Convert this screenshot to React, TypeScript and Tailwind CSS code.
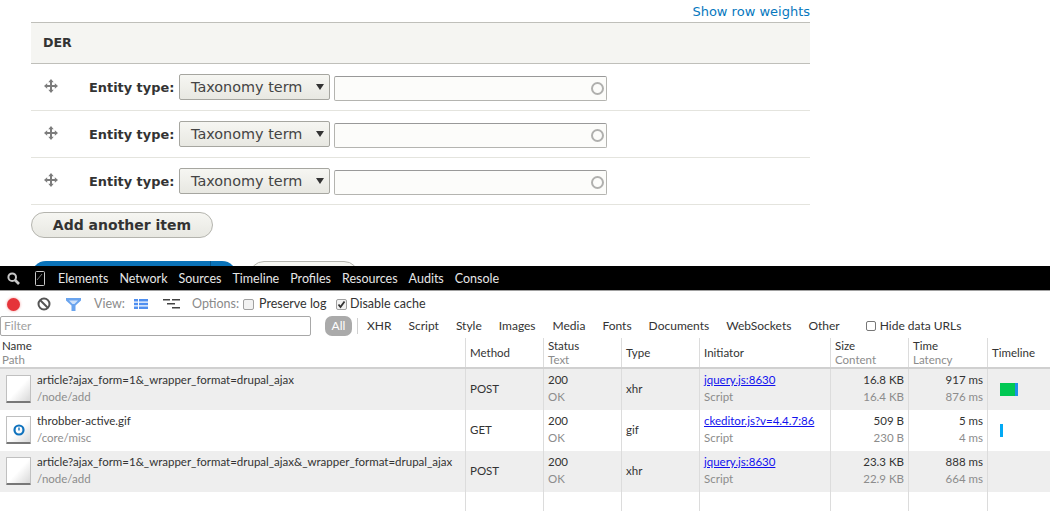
import React, { FC } from "react";

const dejavu = "font-['DejaVu_Sans',sans-serif]";

const MoveIcon = () => (
  <svg width="14" height="14" viewBox="0 0 14 14" fill="#7c7c7c">
    <path d="M7 0 9.7 3.2H8V6H10.8V4.3L14 7 10.8 9.7V8H8V10.8H9.7L7 14 4.3 10.8H6V8H3.2V9.7L0 7 3.2 4.3V6H6V3.2H4.3Z" />
  </svg>
);

const EntityRow = () => (
  <div className="flex h-[47px] border-b border-[#e4e4de] pl-[13px]">
    <div className="pt-[15px]">
      <MoveIcon />
    </div>
    <div className="ml-[31px] flex pt-[10px]">
      <span className="mt-[5px] w-[90px] whitespace-nowrap text-[12.9px] font-bold leading-[18px] text-[#333]">Entity type:</span>
      <div className="flex h-[26px] w-[151px] items-center justify-between rounded-[2px] border border-[#a6a6a0] bg-gradient-to-b from-[#f6f6f2] to-[#e8e8e2] pl-[11px] pr-[5px] text-[14.4px] leading-[18px] text-[#444]">
        <span>Taxonomy term</span>
        <span className="h-0 w-0 border-x-[4.5px] border-t-[6px] border-x-transparent border-t-[#333]" />
      </div>
      <div className="relative mt-[2px] ml-[4px] h-[25px] w-[273px] rounded-[2px] border border-[#b4b4b0] border-t-[#999] bg-[#fcfcfa]">
        <span className="absolute right-[2px] top-[5px] h-[13px] w-[13px] rounded-full border-2 border-[#b0b0ae]" />
      </div>
    </div>
  </div>
);

const Form = () => (
  <div className={`h-[266px] overflow-hidden bg-white pl-[31px] ${dejavu}`}>
    <div className="w-[779px]">
      <div className="flex h-[22px] items-start justify-end pt-[3px] text-[13px] leading-[18px] text-[#0678be]">
        Show row weights
      </div>
      <div className="flex h-[42px] items-center border-y border-[#bfbfba] bg-[#f5f5f2] pl-[12px] text-[12.6px] font-bold text-[#333]">
        DER
      </div>
      <EntityRow />
      <EntityRow />
      <EntityRow />
    </div>
    <div className="mt-[7px] flex h-[26px] w-[182px] items-center justify-center rounded-full border border-[#b4b4ae] bg-gradient-to-b from-[#f6f6f2] to-[#e8e8e2] pt-[1px] text-[14px] font-bold text-[#333]">
      Add another item
    </div>
    <div className="mt-[23px] flex">
      <div className="flex h-[30px] w-[206px] justify-end rounded-full bg-[#0a72b8] pr-[26px]">
        <span className="h-full w-px bg-[#06558c]" />
      </div>
      <div className="ml-[12px] h-[30px] w-[110px] rounded-full border border-[#b4b4ae] bg-[#f6f6f2]" />
    </div>
  </div>
);

const tabs = ["Elements", "Network", "Sources", "Timeline", "Profiles", "Resources", "Audits", "Console"];

const TabBar = () => (
  <div className="flex h-[25px] items-center border-y border-[#a0a0a0] border-t-black bg-black pl-[7px] text-[12.5px] text-[#e6e6e6]">
    <svg width="13" height="13" viewBox="0 0 13 13" fill="none" stroke="#c8c8c8" strokeWidth="2">
      <circle cx="5.2" cy="5.2" r="3.8" />
      <path d="M8 8 12 12" strokeWidth="2.6" />
    </svg>
    <svg className="ml-[15px]" width="10" height="15" viewBox="0 0 10 15" fill="none" stroke="#c8c8c8">
      <rect x="0.5" y="0.5" width="9" height="14" rx="1" />
      <path d="M2 9 7 3" stroke="#777" />
    </svg>
    <div className="ml-[13px] flex gap-[11px] pt-[2px]">
      {tabs.map((t) => (
        <span key={t}>{t}</span>
      ))}
    </div>
  </div>
);

const Toolbar = () => (
  <div className="flex h-[24px] items-center pl-[7px] pt-[2px] text-[12.5px]">
    <span className="h-[13px] w-[13px] rounded-full bg-[#e5343a] shadow-[0_0_3px_#f09a9a]" />
    <svg className="ml-[17px]" width="14" height="14" viewBox="0 0 14 14" fill="none" stroke="#555" strokeWidth="2">
      <circle cx="7" cy="7" r="5.5" />
      <path d="M3 3 11 11" />
    </svg>
    <svg className="ml-[15px]" width="15" height="13" viewBox="0 0 15 13" fill="#6aa4ee">
      <path d="M0 0H15V2.5L9.5 7.5V13H5.5V7.5L0 2.5Z" />
      <path d="M3 2.5H12L8.5 6H6.5Z" fill="#cfe2fb" />
    </svg>
    <span className="ml-[13px] w-[30px] text-[#8a8a8a]">View:</span>
    <svg className="ml-[10px]" width="14" height="10" viewBox="0 0 14 10" fill="#4f8ff0">
      <path d="M0 0H4V2.5H0ZM5 0H14V2.5H5ZM0 3.7H4V6.2H0ZM5 3.7H14V6.2H5ZM0 7.5H4V10H0ZM5 7.5H14V10H5Z" />
    </svg>
    <svg className="ml-[15px]" width="17" height="10" viewBox="0 0 17 10" fill="#444">
      <path d="M0 0H7V1.5H0ZM9 0H17V1.5H9ZM4 4H12V5.5H4ZM9 8H17V9.5H9Z" />
    </svg>
    <span className="ml-[12px] w-[46px] whitespace-nowrap text-[#8a8a8a]">Options:</span>
    <span className="ml-[5px] h-[11px] w-[11px] rounded-[2px] border border-[#a0a0a0] bg-[#f2f2f2]" />
    <span className="ml-[5px] w-[72px] text-[#333]">Preserve log</span>
    <span className="ml-[5px] flex h-[11px] w-[11px] items-center justify-center rounded-[2px] border border-[#a0a0a0] bg-[#f2f2f2]">
      <svg width="9" height="9" viewBox="0 0 9 9" fill="none" stroke="#333" strokeWidth="1.8">
        <path d="M1.5 4.5 3.5 7 7.5 1.5" />
      </svg>
    </span>
    <span className="ml-[3px] text-[#333]">Disable cache</span>
  </div>
);

const filters = ["XHR", "Script", "Style", "Images", "Media", "Fonts", "Documents", "WebSockets", "Other"];

const FilterBar = () => (
  <div className="flex h-[23px] items-center pb-[2px] text-[12px] text-[#333]">
    <div className="flex h-[20px] w-[311px] items-center rounded-[2px] border border-[#a8a8a8] pl-[3px] text-[#a0a0a0]">
      Filter
    </div>
    <span className="ml-[14px] flex h-[20px] w-[27px] items-center justify-center rounded-[7px] bg-[#aaa] text-white">
      All
    </span>
    <span className="ml-[5px] h-[16px] w-px bg-[#d0d0d0]" />
    <div className="ml-[9px] flex gap-[17px]">
      {filters.map((f) => (
        <span key={f}>{f}</span>
      ))}
    </div>
    <span className="ml-[26px] h-[10px] w-[10px] rounded-[2px] border border-[#777] bg-white" />
    <span className="ml-[4px]">Hide data URLs</span>
  </div>
);

const gridCols = "grid grid-cols-[466px_78px_78px_78px_131px_78px_79px_1fr]";
const cell = "border-r border-[#dcdcdc] last:border-r-0";

const TwoLine: FC<{ top: string; sub: string; right?: boolean; link?: boolean }> = ({ top, sub, right, link }) => (
  <div className={`flex h-full flex-col pt-[2px] leading-[17px] ${cell} ${right ? "pr-[4px] text-right" : "pl-[4px]"}`}>
    <span className={link ? "text-[#1111ee] underline" : "text-[#333]"}>{top}</span>
    <span className="text-[#8c8c8c]">{sub}</span>
  </div>
);

const HeadCell: FC<{ top: string; sub?: string; first?: boolean }> = ({ top, sub, first }) => (
  <div className={`flex flex-col justify-center leading-[14px] ${first ? "pl-[2px]" : "pl-[4px]"} ${cell}`}>
    <span className="text-[#333]">{top}</span>
    {sub ? <span className="text-[#8c8c8c]">{sub}</span> : null}
  </div>
);

const FileIcon: FC<{ gif?: boolean }> = ({ gif }) => (
  <div className="flex h-[28px] w-[25px] shrink-0 items-center justify-center rounded-[1px] border border-[#c0c0c0] border-b-2 border-b-[#777] bg-gradient-to-br from-white from-50% to-[#d8d8d8]">
    {gif ? (
      <svg width="12" height="12" viewBox="0 0 12 12" fill="none" stroke="#0f72bd" strokeWidth="2.2">
        <circle cx="6" cy="6" r="4.5" />
        <path d="M6 3.5V6.5" strokeWidth="1.4" />
      </svg>
    ) : null}
  </div>
);

type Req = {
  name: string;
  path: string;
  method: string;
  type: string;
  init: string;
  size: string;
  content: string;
  time: string;
  latency: string;
  gif?: boolean;
  bar?: React.ReactNode;
};

const rows: Req[] = [
  {
    name: "article?ajax_form=1&_wrapper_format=drupal_ajax",
    path: "/node/add",
    method: "POST",
    type: "xhr",
    init: "jquery.js:8630",
    size: "16.8 KB",
    content: "16.4 KB",
    time: "917 ms",
    latency: "876 ms",
    bar: (
      <div className="mt-[14px] ml-[12px] flex h-[13px]">
        <span className="w-[15px] bg-[#00c853]" />
        <span className="w-[3px] bg-[#1e90e8]" />
      </div>
    ),
  },
  {
    name: "throbber-active.gif",
    path: "/core/misc",
    method: "GET",
    type: "gif",
    init: "ckeditor.js?v=4.4.7:86",
    size: "509 B",
    content: "230 B",
    time: "5 ms",
    latency: "4 ms",
    gif: true,
    bar: <div className="mt-[14px] ml-[12px] h-[13px] w-[3px] bg-[#03a9f4]" />,
  },
  {
    name: "article?ajax_form=1&_wrapper_format=drupal_ajax&_wrapper_format=drupal_ajax",
    path: "/node/add",
    method: "POST",
    type: "xhr",
    init: "jquery.js:8630",
    size: "23.3 KB",
    content: "22.9 KB",
    time: "888 ms",
    latency: "664 ms",
  },
];

const RequestRow: FC<{ r: Req; shaded: boolean }> = ({ r, shaded }) => (
  <div className={`${gridCols} h-[41px] ${shaded ? "bg-[#eeeeee]" : "bg-white"}`}>
    <div className={`flex pl-[6px] pt-[6px] ${cell}`}>
      <FileIcon gif={r.gif} />
      <div className="-mt-[4px] ml-[6px] flex flex-col whitespace-nowrap leading-[17px]">
        <span className="text-[#333]">{r.name}</span>
        <span className="text-[#8c8c8c]">{r.path}</span>
      </div>
    </div>
    <div className={`flex items-center pb-[1px] pl-[4px] text-[#333] ${cell}`}>{r.method}</div>
    <TwoLine top="200" sub="OK" />
    <div className={`flex items-center pb-[1px] pl-[4px] text-[#333] ${cell}`}>{r.type}</div>
    <TwoLine top={r.init} sub="Script" link />
    <TwoLine top={r.size} sub={r.content} right />
    <TwoLine top={r.time} sub={r.latency} right />
    <div>{r.bar}</div>
  </div>
);

const Network = () => (
  <div className="text-[11.5px]">
    <div className={`${gridCols} h-[31px] border-b-2 border-[#d0d0d0]`}>
      <HeadCell top="Name" sub="Path" first />
      <HeadCell top="Method" />
      <HeadCell top="Status" sub="Text" />
      <HeadCell top="Type" />
      <HeadCell top="Initiator" />
      <HeadCell top="Size" sub="Content" />
      <HeadCell top="Time" sub="Latency" />
      <HeadCell top="Timeline" />
    </div>
    {rows.map((r, i) => (
      <RequestRow key={i} r={r} shaded={i % 2 === 0} />
    ))}
    <div className={`${gridCols} h-[20px]`}>
      {[0, 1, 2, 3, 4, 5, 6, 7].map((c) => (
        <div key={c} className={cell} />
      ))}
    </div>
  </div>
);

export default function App() {
  return (
    <div className="h-[511px] w-[1050px] overflow-hidden bg-white">
      <Form />
      <div className="font-['Lato',sans-serif]">
        <TabBar />
        <Toolbar />
        <FilterBar />
        <Network />
      </div>
    </div>
  );
}
